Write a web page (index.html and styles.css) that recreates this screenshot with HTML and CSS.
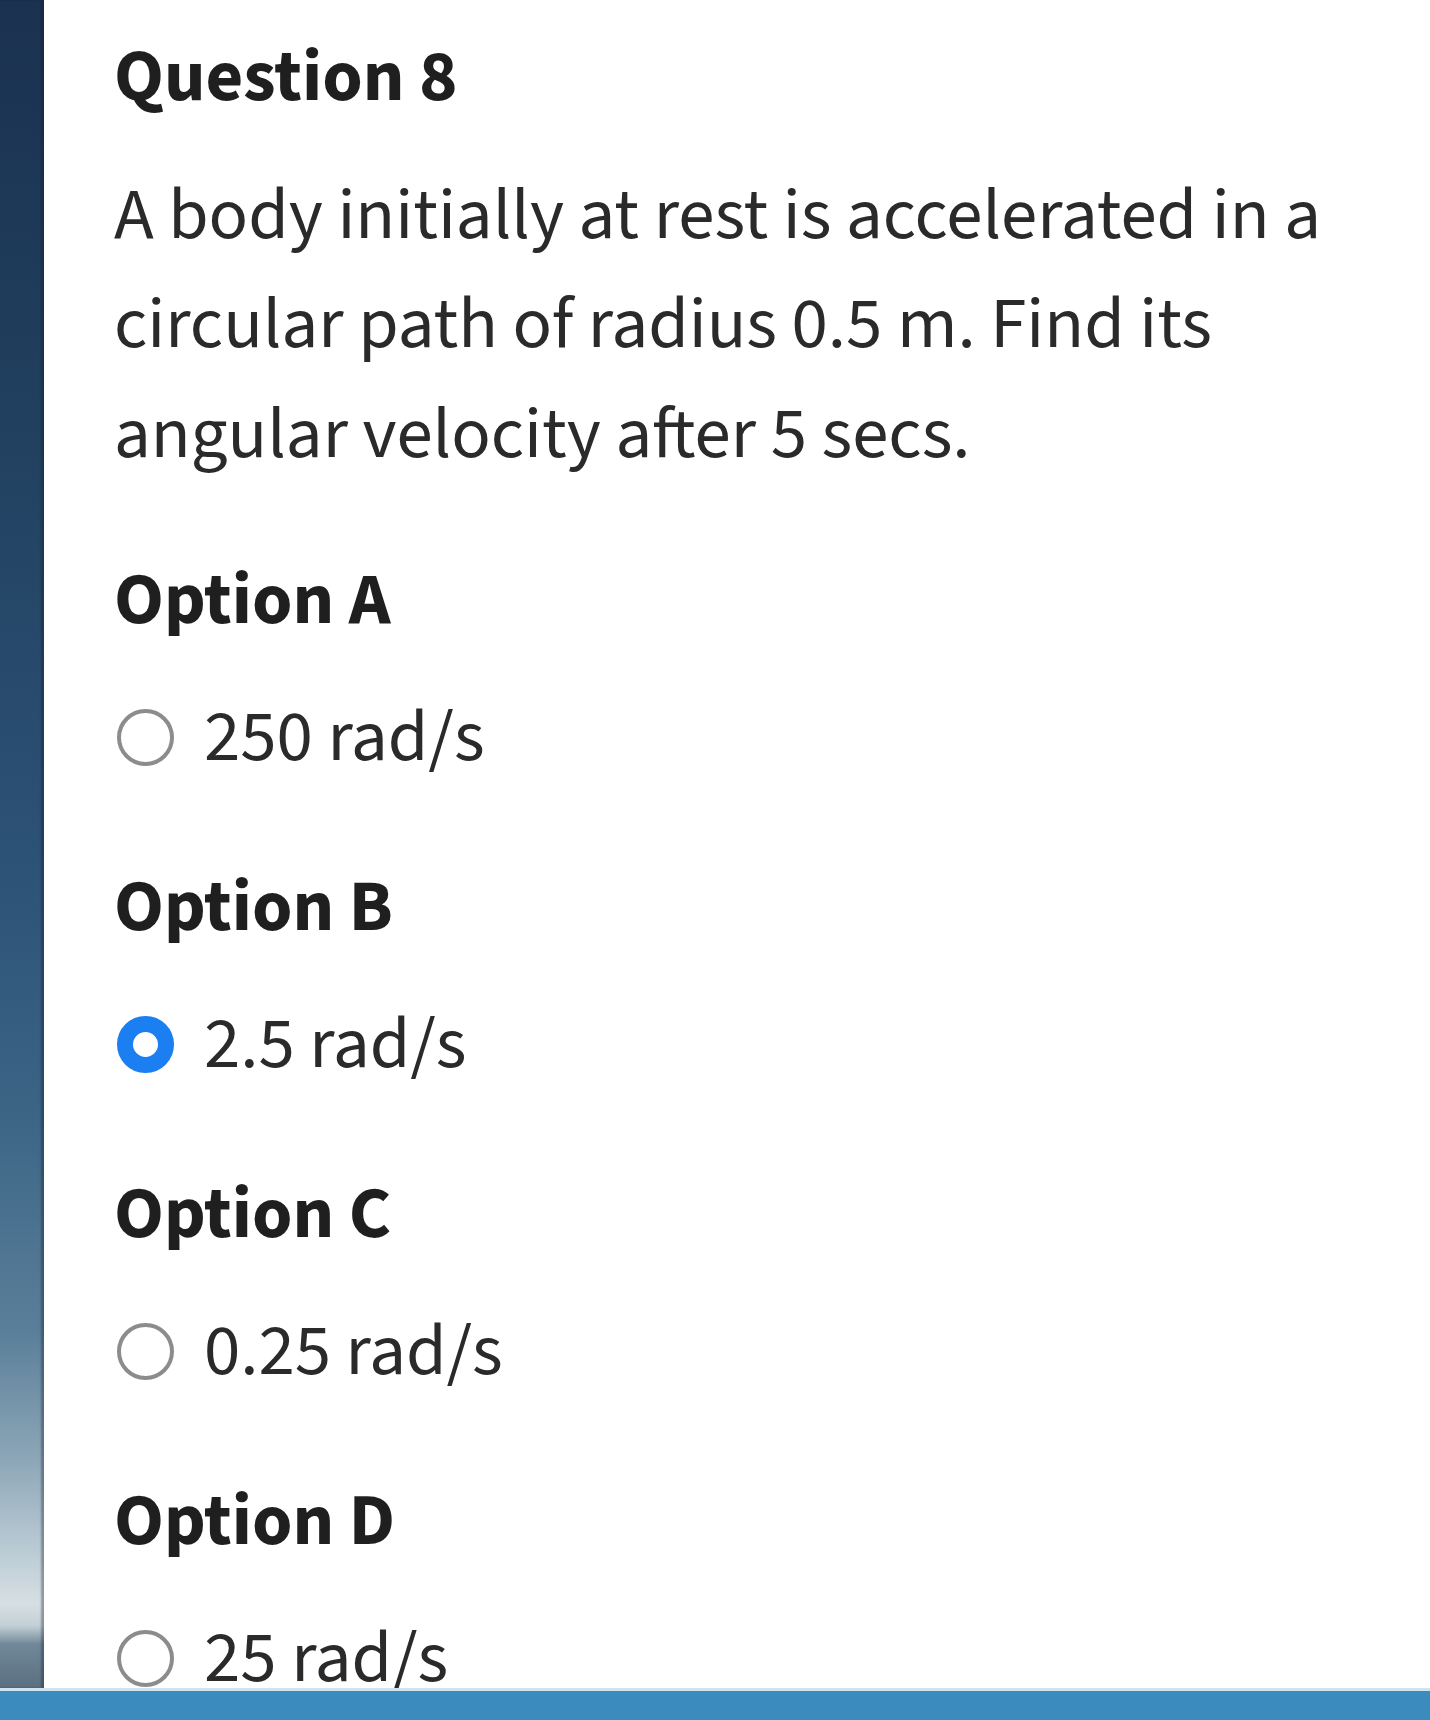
FILE: index.html
```html
<!DOCTYPE html>
<html lang="en">
<head>
<meta charset="utf-8">
<title>Question 8</title>
<link rel="stylesheet" href="styles.css">
</head>
<body>
<div class="screen">
  <aside class="rail"></aside>
  <main class="content">
    <h1 class="q-title">Question 8</h1>
    <p class="q-text">A body initially at rest is accelerated in a circular path of radius 0.5 m. Find its angular velocity after 5 secs.</p>

    <section class="opt">
      <h2 class="opt-title">Option A</h2>
      <label class="choice"><span class="radio"></span><span class="choice-text">250 rad/s</span></label>
    </section>

    <section class="opt">
      <h2 class="opt-title">Option B</h2>
      <label class="choice"><span class="radio radio-on"></span><span class="choice-text">2.5 rad/s</span></label>
    </section>

    <section class="opt">
      <h2 class="opt-title">Option C</h2>
      <label class="choice"><span class="radio"></span><span class="choice-text">0.25 rad/s</span></label>
    </section>

    <section class="opt">
      <h2 class="opt-title">Option D</h2>
      <label class="choice"><span class="radio"></span><span class="choice-text">25 rad/s</span></label>
    </section>
  </main>
</div>
<div class="bottom-bar"></div>
</body>
</html>
```
FILE: styles.css
```css
html, body {
  margin: 0;
  padding: 0;
  background: #ffffff;
}

body {
  width: 1430px;
  height: 1720px;
  overflow: hidden;
  font-family: "Source Sans 3", "Lato", "Liberation Sans", sans-serif;
  color: #262626;
}

.screen {
  display: flex;
  height: 1688px;
  overflow: hidden;
}

.rail {
  flex: 0 0 44px;
  box-shadow: inset -3px 0 2px rgba(20, 30, 45, 0.35);
  background: linear-gradient(180deg,
    #1b3150 0%,
    #21405f 25%,
    #2c5276 51%,
    #3b6485 66%,
    #5a7f9a 79%,
    #8ea7b8 86.6%,
    #b9cad4 91.7%,
    #d6dfe3 95%,
    #c4d0d6 96.3%,
    #71889a 97.4%,
    #5b7080 100%);
}

.content {
  flex: 1;
  padding: 23px 0 0 70px;
  font-size: 73px;
  line-height: 1.5;
}

.q-title {
  margin: 0 0 28px;
  font-size: 73px;
  font-weight: 700;
  line-height: 1.5;
  color: #1f1f1f;
}

.q-text {
  margin: 0 0 57px;
  width: 1260px;
  color: #2a2a2a;
}

.opt + .opt {
  margin-top: 61px;
}

.opt-title {
  margin: 0 0 27px;
  font-size: 73px;
  font-weight: 700;
  line-height: 1.5;
  color: #1f1f1f;
}

.choice {
  display: flex;
  align-items: center;
  gap: 30px;
  color: #2a2a2a;
}

.radio {
  flex: 0 0 auto;
  box-sizing: border-box;
  width: 57px;
  height: 57px;
  margin-left: 3px;
  border-radius: 50%;
  border: 4px solid #8c8c8c;
  background: #ffffff;
}

.radio-on {
  border: 16px solid #1b7ff2;
}

.bottom-bar {
  height: 32px;
  background: #3c8bbf;
  border-top: 3px solid #cfe3f0;
  box-sizing: border-box;
}
```
